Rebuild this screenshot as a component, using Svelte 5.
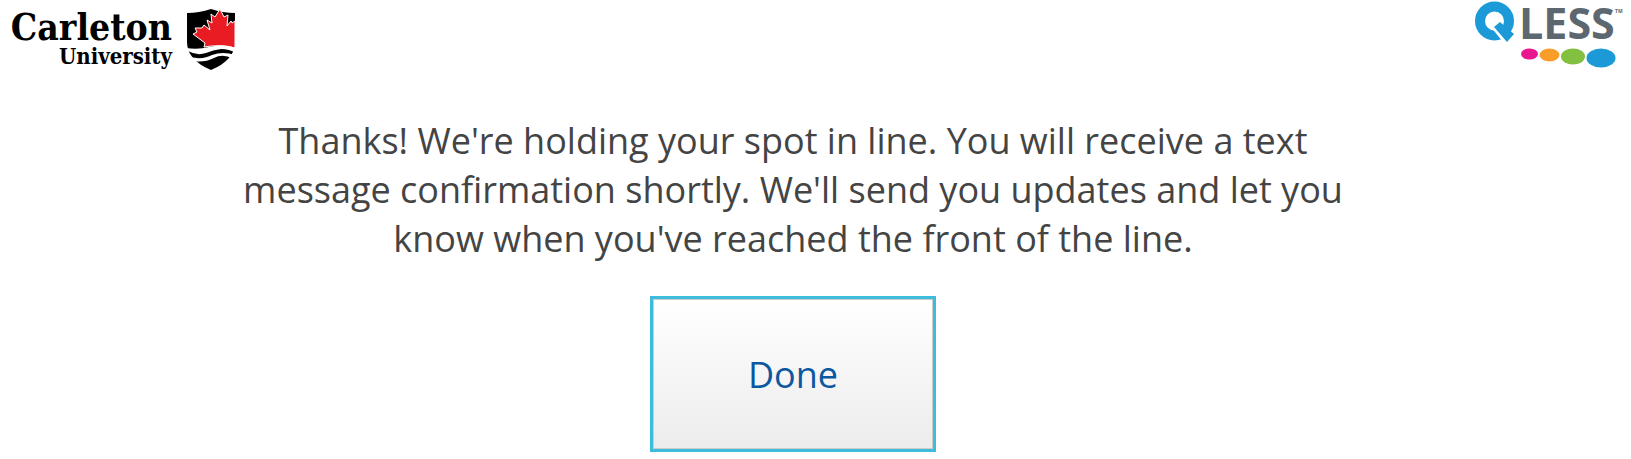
<script>
  let done = $state(false);
</script>

<div class="page">
  <header>
    <svg class="carleton" viewBox="0 0 236 74" role="img" aria-label="Carleton University">
      <text x="172" y="40" text-anchor="end" class="name">Carleton</text>
      <text x="172" y="64" text-anchor="end" class="sub">University</text>
      <path d="M187 13Q199 13 211 9Q223 13 235 13V42Q235 60 211 70Q187 60 187 42Z" fill="#000" />
      <path
        d="M204 47L205 43L193 34L197 32L195 28L202 28L204 25L210 30L207 20L212 23L211 14L215 17L220 9L224 17L228 15L227 26L231 21L232 23L235 21V48Q220 44 204 47Z"
        fill="#e91c24" stroke="#fff" stroke-width="1" />
      <path d="M186 48Q198 50 209 47Q224 43 236 48V53Q229 49 221 49Q213 50 206 53Q197 56 188 51Z" fill="#fff" />
      <path d="M190 57Q203 60 212 55Q223 51 235 55L233 59Q223 53 214 58Q204 63 193 61Z" fill="#fff" />
    </svg>
    <svg class="qless" viewBox="0 0 156 74" role="img" aria-label="QLess">
      <circle cx="19.500" cy="21" r="14.500" fill="none" stroke="#1b9ad7" stroke-width="10" />
      <path d="M16 27L19 26L31 40L28 42Z" fill="#fff" />
      <path d="M19 27L25 22L39 34L32 42Z" fill="#1b9ad7" />
      <text x="44" y="39" class="less">LESS</text>
      <text x="140" y="13" class="tm">TM</text>
      <ellipse cx="54.500" cy="54" rx="8.500" ry="5.500" fill="#e8168f" />
      <ellipse cx="74.500" cy="55" rx="10" ry="6.500" fill="#f99d2a" />
      <ellipse cx="98" cy="56.500" rx="12" ry="8" fill="#83bf41" />
      <ellipse cx="126" cy="58" rx="14.500" ry="9.500" fill="#1b9ad7" />
    </svg>
  </header>
  <main>
    <p>
      Thanks! We're holding your spot in line. You will receive a text message confirmation
      shortly. We'll send you updates and let you know when you've reached the front of the line.
    </p>
    <button type="button" onclick={() => (done = true)} disabled={done}>Done</button>
  </main>
</div>

<style>
  :global(body) {
    background: #fff;
  }
  .page {
    font-family: "Open Sans", sans-serif;
    color: #444;
  }
  header {
    display: flex;
    justify-content: space-between;
  }
  svg {
    display: block;
    height: 74px;
    overflow: visible;
  }
  .name {
    font: bold 37px "DejaVu Serif Condensed", "DejaVu Serif", serif;
  }
  .sub {
    font: bold 22px "DejaVu Serif Condensed", "DejaVu Serif", serif;
  }
  .less {
    font: bold 43px "Open Sans", sans-serif;
    fill: #5c6770;
  }
  .tm {
    font: bold 5px "Open Sans", sans-serif;
    fill: #5c6770;
  }
  main {
    display: flex;
    flex-direction: column;
    align-items: center;
    gap: 33px;
    padding: 42px 45px 6px 0;
  }
  p {
    max-width: 1120px;
    margin: 0;
    font-size: 36px;
    line-height: 49px;
    text-align: center;
  }
  button {
    min-width: 286px;
    min-height: 156px;
    border: 3px solid #3ebcdb;
    border-radius: 0;
    box-shadow: inset 0 0 0 1px #ccc;
    background: linear-gradient(#fff, #ececec);
    color: #0c58a0;
    font: 36px "Open Sans", sans-serif;
  }
</style>
